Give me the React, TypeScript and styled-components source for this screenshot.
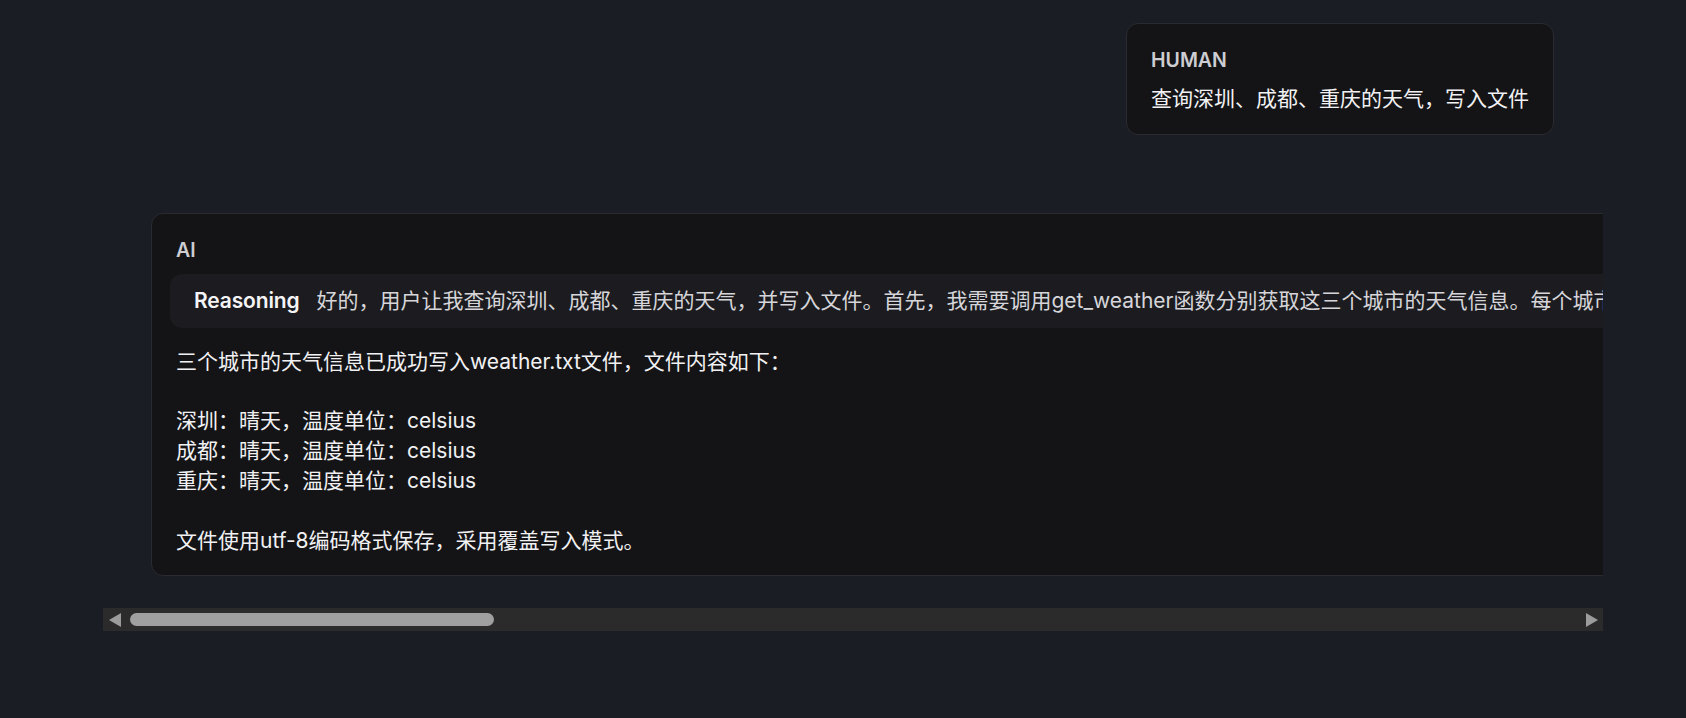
import styled, { createGlobalStyle } from "styled-components";

const GlobalStyle = createGlobalStyle`
    html, body {
        margin: 0;
        padding: 0;
        background: #1b1d24;
    }
    body {
        font-family: Inter, "Noto Sans CJK SC", "Noto Sans", sans-serif;
        color: #ececee;
        -webkit-font-smoothing: antialiased;
    }
`;

const Page = styled.div`
    width: 1686px;
    height: 718px;
    box-sizing: border-box;
    padding: 23px 0 0 103px;
    overflow: hidden;
`;

const Thread = styled.div`
    width: 1500px;
    display: flex;
    flex-direction: column;
`;

const HumanRow = styled.div`
    display: flex;
    justify-content: flex-end;
    padding: 0 49px;
`;

const Bubble = styled.div`
    background: #141416;
    border: 1px solid #2a2b31;
    border-radius: 12px;
    padding: 22px 24px 21px;
`;

const Role = styled.div`
    font-size: 19.5px;
    line-height: 28px;
    font-weight: 600;
    color: #cdcdd2;
`;

const HumanText = styled.div`
    margin-top: 10px;
    font-size: 21px;
    line-height: 29.4px;
    color: #f1f1f3;
    white-space: nowrap;
`;

const ScrollArea = styled.div`
    margin-top: 78px;
    overflow: hidden;
    padding: 0 49px 32px 48px;
`;

const AiCard = styled(Bubble)`
    width: max-content;
    padding: 22px 24px 20px;
`;

const Reasoning = styled.div`
    display: flex;
    align-items: center;
    gap: 17px;
    margin: 10px -6px 0;
    padding: 12px 24px;
    background: #1c1c20;
    border-radius: 12px;
    font-size: 21px;
    line-height: 29.4px;
    white-space: nowrap;
`;

const ReasoningTitle = styled.span`
    font-weight: 600;
    letter-spacing: -0.15px;
    color: #f4f4f6;
`;

const ReasoningText = styled.span`
    color: #d6d6da;
`;

const Answer = styled.div`
    margin-top: 19px;
    font-size: 21px;
    line-height: 29.8px;
    color: #f1f1f3;
    white-space: pre-wrap;
`;

const ScrollBar = styled.div`
    display: flex;
    height: 23px;
    background: #2b2b2b;
`;

const ArrowButton = styled.div<{ $dir: "left" | "right" }>`
    width: 23px;
    flex: none;
    display: flex;
    align-items: center;
    justify-content: center;

    &::before {
        content: "";
        width: 0;
        height: 0;
        border-top: 7px solid transparent;
        border-bottom: 7px solid transparent;
        ${(p) => (p.$dir === "left" ? "border-right: 12px solid #9c9c9c;" : "border-left: 12px solid #9c9c9c;")}
    }
`;

const Track = styled.div`
    flex: 1;
    padding: 5px 4px;
`;

const Thumb = styled.div<{ $width: number }>`
    width: ${(p) => p.$width}px;
    height: 13px;
    border-radius: 7px;
    background: #a0a0a0;
`;

const reasoning =
    "好的，用户让我查询深圳、成都、重庆的天气，并写入文件。首先，我需要调用get_weather函数分别获取这三个城市的天气信息。每个城市都需要单独调用一次，参数是城市名称。拿到结果之后，再把三个城市的天气整理成文本，调用write_file函数写入weather.txt文件，编码使用utf-8，写入模式选择覆盖。最后确认写入成功，并把文件内容反馈给用户。";

const answer = `三个城市的天气信息已成功写入weather.txt文件，文件内容如下：

深圳：晴天，温度单位：celsius
成都：晴天，温度单位：celsius
重庆：晴天，温度单位：celsius

文件使用utf-8编码格式保存，采用覆盖写入模式。`;

export default function App() {
    return (
        <>
            <GlobalStyle />
            <Page>
                <Thread>
                    <HumanRow>
                        <Bubble>
                            <Role>HUMAN</Role>
                            <HumanText>查询深圳、成都、重庆的天气，写入文件</HumanText>
                        </Bubble>
                    </HumanRow>
                    <ScrollArea>
                        <AiCard>
                            <Role>AI</Role>
                            <Reasoning>
                                <ReasoningTitle>Reasoning</ReasoningTitle>
                                <ReasoningText>{reasoning}</ReasoningText>
                            </Reasoning>
                            <Answer>{answer}</Answer>
                        </AiCard>
                    </ScrollArea>
                    <ScrollBar>
                        <ArrowButton $dir="left" />
                        <Track>
                            <Thumb $width={364} />
                        </Track>
                        <ArrowButton $dir="right" />
                    </ScrollBar>
                </Thread>
            </Page>
        </>
    );
}
